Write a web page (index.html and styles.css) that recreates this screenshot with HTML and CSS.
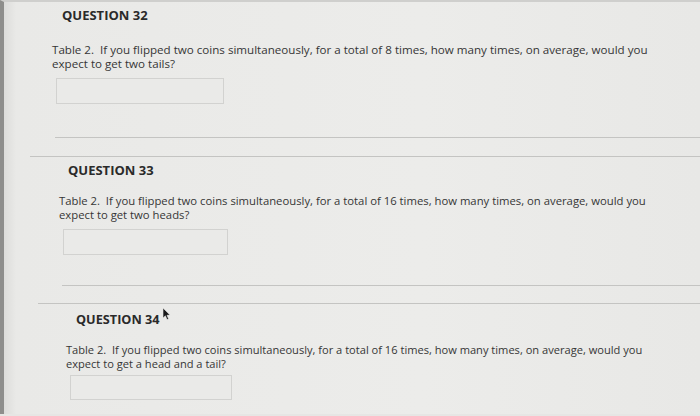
FILE: index.html
```html
<!DOCTYPE html>
<html>
<head>
<meta charset="utf-8">
<link rel="stylesheet" href="styles.css">
</head>
<body>
<div class="screen">
  <section class="question q1">
    <h2 class="title">QUESTION 32</h2>
    <p class="prompt">Table 2.&nbsp; If you flipped two coins simultaneously, for a total of 8 times, how many times, on average, would you expect to get two tails?</p>
    <div class="answer"></div>
  </section>
  <div class="rule rule-inner r1"></div>
  <div class="rule rule-outer r1b"></div>
  <section class="question q2">
    <h2 class="title">QUESTION 33</h2>
    <p class="prompt">Table 2.&nbsp; If you flipped two coins simultaneously, for a total of 16 times, how many times, on average, would you expect to get two heads?</p>
    <div class="answer"></div>
  </section>
  <div class="rule rule-inner r2"></div>
  <div class="rule rule-outer r2b"></div>
  <section class="question q3">
    <h2 class="title">QUESTION 34 <svg class="cursor" width="9" height="14" viewBox="0 0 9 14"><path d="M1 1 L1 11 L3.4 8.8 L5 12.6 L6.6 11.9 L5 8.3 L8 8.1 Z" fill="#1a1a1a" stroke="#e8e8e6" stroke-width="0.6"/></svg></h2>
    <p class="prompt">Table 2.&nbsp; If you flipped two coins simultaneously, for a total of 16 times, how many times, on average, would you expect to get a head and a tail?</p>
    <div class="answer"></div>
  </section>
</div>
</body>
</html>
```
FILE: styles.css
```css
html, body {
  margin: 0;
  padding: 0;
}
body {
  width: 700px;
  height: 416px;
  overflow: hidden;
  background: #e6e6e4;
  font-family: "Open Sans", "Liberation Sans", sans-serif;
  color: #3a3a3a;
}
.screen {
  height: 414px;
  border-top: 2px solid #cfcfcd;
  border-left: 4px solid #8e8e8c;
  background: linear-gradient(90deg, #dcdcda 0, #e9e9e7 12px, #ececea 60%, #e8e8e6 100%);
  box-sizing: border-box;
  position: relative;
}
.question {
  position: relative;
}
.q1 { padding-left: 48px; padding-top: 5px; }
.q2 { padding-left: 55px; padding-top: 5px; }
.q3 { padding-left: 62px; padding-top: 7px; }
.title {
  margin: 0 0 0 10px;
  font-size: 13px;
  line-height: 16px;
  font-weight: 700;
  color: #2a2a2a;
  position: relative;
}
.q2 .title { margin-left: 9px; }
.q3 .title { font-size: 12.7px; }
.prompt {
  margin: 20px 0 0 0;
  font-size: 11.6px;
  line-height: 14px;
  width: 615px;
  color: #363636;
}
.q2 .prompt { margin-top: 16px; font-size: 11.3px; }
.q3 .prompt { margin-top: 16px; font-size: 11.1px; width: 585px; }
.answer {
  margin: 7px 0 0 4px;
  width: 166px;
  height: 24px;
  border: 1px solid #d2d2d0;
  background: #eaeae8;
}
.q2 .answer { margin-top: 7px; width: 163px; }
.q3 .answer { margin-top: 4px; width: 160px; height: 23px; }
.rule {
  height: 1px;
  background: #c4c4c2;
}
.rule-inner.r1 { margin: 33px 0 0 51px; }
.rule-outer.r1b { margin: 18px 0 0 26px; }
.rule-inner.r2 { margin: 30px 0 0 58px; }
.rule-outer.r2b { margin: 17px 0 0 34px; }
.cursor {
  position: absolute;
  left: 86px;
  top: -4px;
}
```
